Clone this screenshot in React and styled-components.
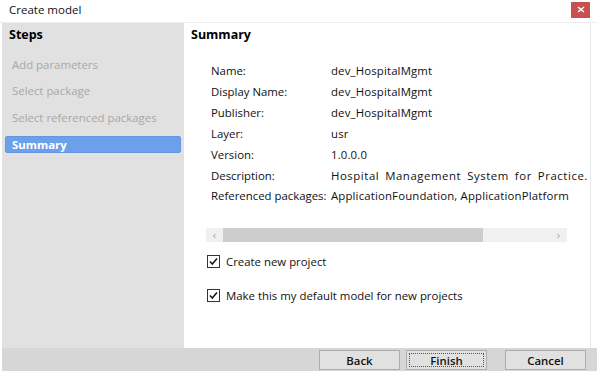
import React from 'react';
import styled, { createGlobalStyle } from 'styled-components';

const GlobalStyle = createGlobalStyle`
	html, body {
		margin: 0;
		padding: 0;
		background: #ffffff;
	}
	body {
		font-family: 'Open Sans', 'Noto Sans', sans-serif;
		font-size: 11.4px;
		color: #000000;
	}
`;

const steps = [
	{ label: 'Add parameters' },
	{ label: 'Select package' },
	{ label: 'Select referenced packages' },
	{ label: 'Summary', active: true },
];

const summary = [
	['Name:', 'dev_HospitalMgmt'],
	['Display Name:', 'dev_HospitalMgmt'],
	['Publisher:', 'dev_HospitalMgmt'],
	['Layer:', 'usr'],
	['Version:', '1.0.0.0'],
	['Description:', 'Hospital Management System for Practice.', true],
	['Referenced packages:', 'ApplicationFoundation, ApplicationPlatform'],
];

function CheckIcon() {
	return (
		<svg width='11' height='11' viewBox='0 0 11 11'>
			<path d='M2 5.5 L4.3 8 L9 2.5' fill='none' stroke='#1a1a1a' strokeWidth='1.6' />
		</svg>
	);
}

export default function App() {
	return (
		<>
			<GlobalStyle />
			<Window>
				<TitleBar>
					<Title>Create model</Title>
					<CloseButton>
						<svg width='8' height='7' viewBox='0 0 8 7'>
							<path d='M1 1 L7 6 M7 1 L1 6' stroke='#ffffff' strokeWidth='1.5' />
						</svg>
					</CloseButton>
				</TitleBar>
				<Body>
					<Sidebar>
						<SidebarTitle>Steps</SidebarTitle>
						<StepList>
							{steps.map((step) => (
								<StepItem key={step.label} $active={step.active}>
									{step.label}
								</StepItem>
							))}
						</StepList>
					</Sidebar>
					<Content>
						<ContentTitle>Summary</ContentTitle>
						<SummaryGrid>
							{summary.map(([label, value, wide]) => (
								<React.Fragment key={label}>
									<PropLabel>{label}</PropLabel>
									<PropValue $wide={wide}>{value}</PropValue>
								</React.Fragment>
							))}
						</SummaryGrid>
						<ScrollBar>
							<ScrollArrow>&lsaquo;</ScrollArrow>
							<ScrollTrack>
								<ScrollThumb />
							</ScrollTrack>
							<ScrollArrow>&rsaquo;</ScrollArrow>
						</ScrollBar>
						<CheckRow $top={11}>
							<CheckBox>
								<CheckIcon />
							</CheckBox>
							Create new project
						</CheckRow>
						<CheckRow $top={18}>
							<CheckBox>
								<CheckIcon />
							</CheckBox>
							Make this my default model for new projects
						</CheckRow>
					</Content>
				</Body>
				<Footer>
					<Button>Back</Button>
					<Button $focused>
						<FocusRing>Finish</FocusRing>
					</Button>
					<Button $gap={18}>Cancel</Button>
				</Footer>
			</Window>
		</>
	);
}

const Window = styled.div`
	width: 597px;
	height: 371px;
	display: flex;
	flex-direction: column;
	overflow: hidden;
	background: #ffffff;
`;

const TitleBar = styled.div`
	height: 22px;
	display: flex;
	align-items: center;
	justify-content: space-between;
	padding: 0 7px 0 9px;
	border-bottom: 1px solid #ececec;
	box-sizing: content-box;
`;

const Title = styled.div`
	font-size: 11.5px;
	color: #111111;
	margin-top: -4px;
`;

const CloseButton = styled.div`
	width: 19px;
	height: 16px;
	margin-top: -3px;
	background: #c75050;
	display: flex;
	align-items: center;
	justify-content: center;
`;

const Body = styled.div`
	flex: 1;
	display: flex;
	margin-left: 2px;
	min-height: 0;
`;

const Sidebar = styled.div`
	width: 182px;
	background: #e1e1e1;
	padding: 2px 3px 0 3px;
	box-sizing: border-box;
	display: flex;
	flex-direction: column;
`;

const SidebarTitle = styled.div`
	font-weight: 700;
	font-size: 12.5px;
	height: 20px;
	line-height: 20px;
	padding-left: 4px;
`;

const StepList = styled.div`
	display: flex;
	flex-direction: column;
	gap: 9.8px;
	margin-top: 10.5px;
`;

const StepItem = styled.div`
	height: 17px;
	line-height: 16px;
	padding-left: 6px;
	border-radius: 2px;
	white-space: nowrap;
	color: ${(p) => (p.$active ? '#ffffff' : '#a8a8a8')};
	font-weight: ${(p) => (p.$active ? 700 : 400)};
	background: ${(p) => (p.$active ? '#6ca0ea' : 'transparent')};
	border: 1px solid ${(p) => (p.$active ? '#6597e0' : 'transparent')};
	box-sizing: border-box;
`;

const Content = styled.div`
	flex: 1;
	border-right: 1px solid #e6e6e6;
	margin-right: 6px;
	padding: 2px 0 0 7px;
	display: flex;
	flex-direction: column;
	min-width: 0;
`;

const ContentTitle = styled.div`
	font-weight: 700;
	font-size: 12.5px;
	height: 20px;
	line-height: 20px;
`;

const SummaryGrid = styled.div`
	display: grid;
	grid-template-columns: 120px 1fr;
	grid-auto-rows: 20.83px;
	align-items: center;
	margin: 15.5px 0 0 20px;
	white-space: nowrap;
`;

const PropLabel = styled.div`
	color: #111111;
`;

const PropValue = styled.div`
	color: #111111;
	word-spacing: ${(p) => (p.$wide ? '2.5px' : 'normal')};
	letter-spacing: ${(p) => (p.$wide ? '0.55px' : '0.15px')};
`;

const ScrollBar = styled.div`
	display: flex;
	align-items: center;
	height: 14px;
	margin: 22px 23px 0 15px;
	background: #f0f0f0;
`;

const ScrollArrow = styled.div`
	width: 17px;
	text-align: center;
	color: #a6a6a6;
	font-size: 11px;
	line-height: 14px;
`;

const ScrollTrack = styled.div`
	flex: 1;
	height: 100%;
`;

const ScrollThumb = styled.div`
	width: 260px;
	height: 100%;
	background: #cdcdcd;
`;

const CheckRow = styled.div`
	display: flex;
	align-items: center;
	gap: 6px;
	margin: ${(p) => p.$top}px 0 0 16px;
	height: 16px;
	color: #111111;
`;

const CheckBox = styled.div`
	width: 11px;
	height: 11px;
	border: 1px solid #333333;
	background: #ffffff;
	display: flex;
	align-items: center;
	justify-content: center;
`;

const Footer = styled.div`
	height: 23px;
	margin-left: 2px;
	background: #d6d6d6;
	display: flex;
	align-items: center;
	justify-content: flex-end;
	padding-right: 11px;
`;

const Button = styled.div`
	width: 81px;
	height: 20px;
	box-sizing: border-box;
	margin-left: ${(p) => (p.$gap ? p.$gap : 6)}px;
	background: #e1e1e1;
	border: 1px solid #adadad;
	display: flex;
	align-items: center;
	justify-content: center;
	padding: ${(p) => (p.$focused ? '2px' : '0')};
	font-weight: 600;
	color: #111111;
	margin-top: 1px;
`;

const FocusRing = styled.div`
	flex: 1;
	align-self: stretch;
	border: 1px dotted #555555;
	display: flex;
	align-items: center;
	justify-content: center;
`;
